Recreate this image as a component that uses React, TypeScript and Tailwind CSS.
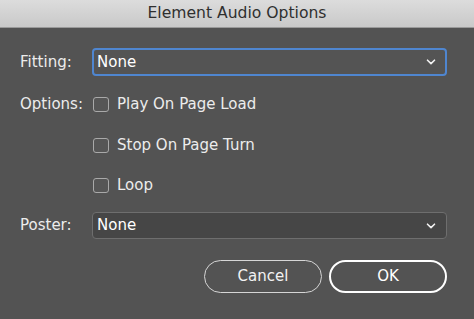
import React from "react";

const Chevron = () => (
  <svg width="10" height="6" viewBox="0 0 10 6" className="shrink-0">
    <path d="M1.5 1.2 L5 4.6 L8.5 1.2" fill="none" stroke="#f2f2f2" strokeWidth="1.6" strokeLinecap="round" strokeLinejoin="round" />
  </svg>
);

const Check = ({ label }: { label: string }) => (
  <div className="flex items-center h-[22px]">
    <div className="w-[16px] h-[15px] rounded-[3px] border border-[#a9a9a9] bg-[#565656] shrink-0" />
    <span className="ml-[8px] text-[15px] text-[#ececec] leading-none">{label}</span>
  </div>
);

export default function App() {
  return (
    <div
      className="w-[474px] h-[319px] bg-[#535353] flex flex-col overflow-hidden"
      style={{ fontFamily: '"DejaVu Sans", "Noto Sans", sans-serif' }}
    >
      <div className="h-[28px] shrink-0 bg-gradient-to-b from-[#dcdcdc] to-[#c9c9c9] border-b border-[#9a9a9a] flex items-center justify-center">
        <span className="text-[15.6px] text-[#2f2f2f] leading-none">Element Audio Options</span>
      </div>
      <div className="flex flex-col pl-[20px] pr-[27px]">
        <div className="flex items-center mt-[20px] h-[28px]">
          <span className="w-[72px] text-[15px] text-[#ececec] leading-none">Fitting:</span>
          <div className="flex-1 h-[28px] rounded-[4px] border-2 border-[#4f86d0] bg-[#545454] flex items-center pl-[3px] pr-[9px]">
            <span className="flex-1 text-[15px] text-white leading-none">None</span>
            <Chevron />
          </div>
        </div>
        <div className="flex items-center mt-[17px]">
          <span className="w-[73px] text-[15px] text-[#ececec] leading-none">Options:</span>
          <Check label="Play On Page Load" />
        </div>
        <div className="flex items-center mt-[19px] pl-[73px]">
          <Check label="Stop On Page Turn" />
        </div>
        <div className="flex items-center mt-[18px] pl-[73px]">
          <Check label="Loop" />
        </div>
        <div className="flex items-center mt-[16px] h-[27px]">
          <span className="w-[72px] text-[15px] text-[#ececec] leading-none">Poster:</span>
          <div className="flex-1 h-[27px] rounded-[4px] border border-[#6e6e6e] bg-[#464646] flex items-center pl-[4px] pr-[10px]">
            <span className="flex-1 text-[15px] text-white leading-none">None</span>
            <Chevron />
          </div>
        </div>
        <div className="flex justify-end gap-[7px] mt-[21px]">
          <button className="w-[118px] h-[33px] rounded-full border-[1.5px] border-[#d6d6d6] text-[15px] text-[#f2f2f2] leading-none">
            Cancel
          </button>
          <button className="w-[118px] h-[33px] rounded-full border-2 border-white text-[15px] text-white leading-none">
            OK
          </button>
        </div>
      </div>
    </div>
  );
}
